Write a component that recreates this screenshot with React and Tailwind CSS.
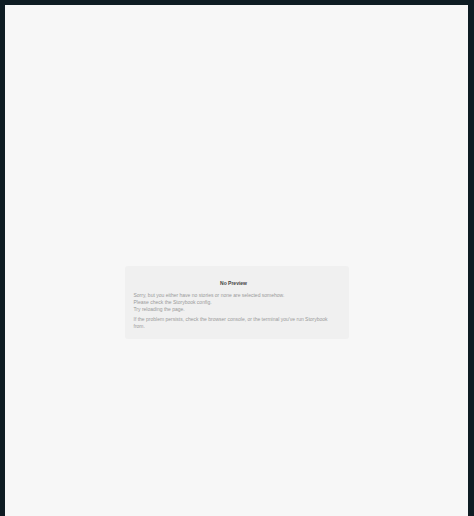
export default function App() {
  return (
    <div className="h-[516px] w-[474px] bg-[#0e1c23] pl-[5px] pr-[6px] pt-[5px] overflow-hidden">
      <div className="h-full bg-[#f7f7f7] flex flex-col items-center pt-[261px] font-['Liberation_Sans',Arial,sans-serif]">
        <div className="w-[224px] rounded-[3px] bg-[#f0f0f0] px-[9px] pt-[14px] pb-[9px] text-[5px] leading-[7px] text-[#9a9a9a]">
          <p className="text-center font-bold text-[#444] mb-[5px] pr-[6px]">No Preview</p>
          <p>Sorry, but you either have no stories or none are selected somehow.</p>
          <p>Please check the Storybook config.</p>
          <p className="mb-[3px]">Try reloading the page.</p>
          <p>If the problem persists, check the browser console, or the terminal you've run Storybook from.</p>
        </div>
      </div>
    </div>
  );
}
